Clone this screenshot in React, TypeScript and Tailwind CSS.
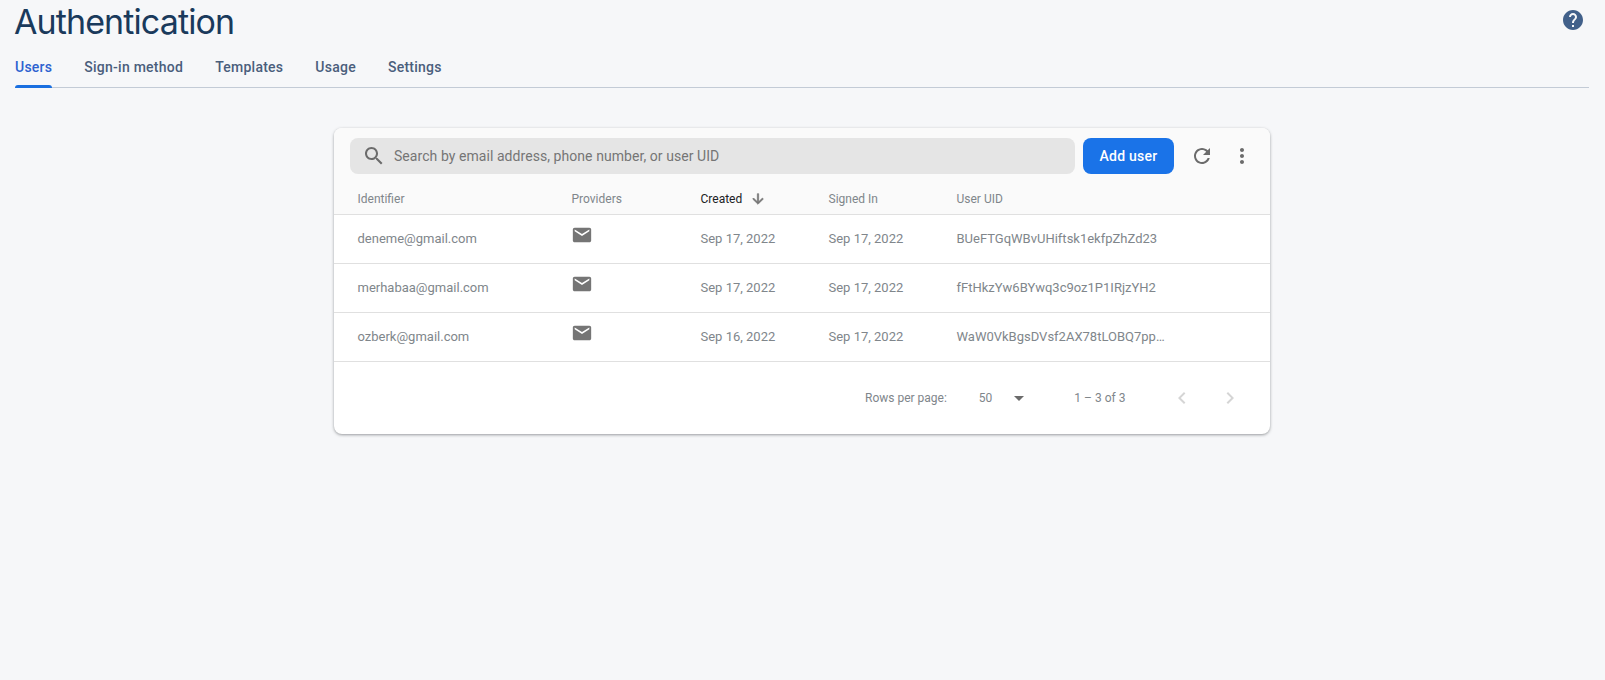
import React from "react";

const P = {
  search: "M15.5 14h-.79l-.28-.27C15.41 12.59 16 11.11 16 9.5 16 5.91 13.09 3 9.5 3S3 5.91 3 9.5 5.91 16 9.5 16c1.61 0 3.09-.59 4.23-1.57l.27.28v.79l5 4.99L20.49 19l-4.99-5zm-6 0C7.01 14 5 11.99 5 9.5S7.01 5 9.5 5 14 7.01 14 9.5 11.99 14 9.5 14z",
  refresh: "M17.65 6.35C16.2 4.9 14.21 4 12 4c-4.42 0-7.99 3.58-7.99 8s3.57 8 7.99 8c3.73 0 6.84-2.55 7.73-6h-2.08c-.82 2.33-3.04 4-5.65 4-3.31 0-6-2.69-6-6s2.69-6 6-6c1.66 0 3.14.69 4.22 1.78L13 11h7V4l-2.35 2.35z",
  more: "M12 8c1.1 0 2-.9 2-2s-.9-2-2-2-2 .9-2 2 .9 2 2 2zm0 2c-1.1 0-2 .9-2 2s.9 2 2 2 2-.9 2-2-.9-2-2-2zm0 6c-1.1 0-2 .9-2 2s.9 2 2 2 2-.9 2-2-.9-2-2-2z",
  mail: "M20 4H4c-1.1 0-1.99.9-1.99 2L2 18c0 1.1.9 2 2 2h16c1.1 0 2-.9 2-2V6c0-1.1-.9-2-2-2zm0 4l-8 5-8-5V6l8 5 8-5v2z",
  help: "M12 2C6.48 2 2 6.48 2 12s4.48 10 10 10 10-4.48 10-10S17.52 2 12 2zm1 17h-2v-2h2v2zm2.07-7.75l-.9.92C13.45 12.9 13 13.5 13 15h-2v-.5c0-1.1.45-2.1 1.17-2.83l1.24-1.26c.37-.36.59-.86.59-1.41 0-1.1-.9-2-2-2s-2 .9-2 2H8c0-2.21 1.79-4 4-4s4 1.79 4 4c0 .88-.36 1.68-.93 2.25z",
  down: "M20 12l-1.41-1.41L13 16.17V4h-2v12.17l-5.58-5.59L4 12l8 8 8-8z",
  left: "M15.41 7.41L14 6l-6 6 6 6 1.41-1.41L10.83 12z",
  right: "M10 6L8.59 7.41 13.17 12l-4.58 4.58L10 18l6-6z",
  caret: "M7 10l5 5 5-5z",
};

function Icon({ d, className, stroke }: { d: string; className: string; stroke?: boolean }) {
  return (
    <svg viewBox="0 0 24 24" className={className} fill="currentColor" stroke={stroke ? "currentColor" : "none"} strokeWidth={stroke ? 1 : 0}>
      <path d={d} />
    </svg>
  );
}

const rows = [
  ["deneme@gmail.com", "Sep 17, 2022", "Sep 17, 2022", "BUeFTGqWBvUHiftsk1ekfpZhZd23"],
  ["merhabaa@gmail.com", "Sep 17, 2022", "Sep 17, 2022", "fFtHkzYw6BYwq3c9oz1P1IRjzYH2"],
  ["ozberk@gmail.com", "Sep 16, 2022", "Sep 17, 2022", "WaW0VkBgsDVsf2AX78tLOBQ7pp…"],
];

const grid = "grid grid-cols-[214px_129px_128px_128px_1fr] pl-[23.5px]";

export default function App() {
  return (
    <div className="h-[680px] bg-[#f6f7f9] font-['Roboto',sans-serif] overflow-hidden">
      <header className="pl-[15px] pr-4">
        <div className="flex items-start justify-between h-[53px]">
          <h1 className="text-[34px] leading-[44px] text-[#1a3a5c] font-['Inter',sans-serif] font-normal -ml-px tracking-[-0.9px]">Authentication</h1>
          <Icon d={P.help} className="w-6 h-6 mt-2 mr-1 text-[#41608a]" />
        </div>
        <nav className="flex gap-8 h-[35px] border-b border-[#c3cbd6] text-sm font-medium text-[#4a5e7c] tracking-[0.25px]">
          <div className="relative pt-1 text-[#2d62d0]">
            Users
            <span className="absolute left-0 right-0 -bottom-px h-[3px] rounded-t-[3px] bg-[#1a6fe0]" />
          </div>
          <div className="pt-1">Sign-in method</div>
          <div className="pt-1">Templates</div>
          <div className="pt-1">Usage</div>
          <div className="pt-1">Settings</div>
        </nav>
      </header>

      <main className="ml-[334px] mt-10 w-[936px] h-[306px] rounded-lg bg-white shadow-[0_1px_3px_rgba(60,64,67,0.5)] overflow-hidden">
        <div className="bg-[#fafafa]">
          <div className="flex items-center h-[46px] pt-2.5 pl-4">
            <div className="flex items-center w-[725px] h-9 rounded-lg bg-[#e5e5e5] pl-3 text-sm text-[#757575] tracking-[0.06px]">
              <Icon d={P.search} className="w-6 h-6 text-[#6b6b6b] mr-2" />
              Search by email address, phone number, or user UID
            </div>
            <button className="ml-2 w-[91px] h-9 rounded-lg bg-[#1a73e8] text-white text-sm font-medium tracking-[0.25px]">Add user</button>
            <Icon d={P.refresh} className="ml-4 w-6 h-6 text-[#6b6b6b]" />
            <Icon d={P.more} className="ml-4 w-6 h-6 text-[#6b6b6b]" />
          </div>
          <div className={`${grid} items-center h-[41px] pt-[10px] text-xs text-[#80868b] border-b border-[#e0e0e0]`}>
            <div>Identifier</div>
            <div>Providers</div>
            <div className="flex items-center font-normal text-[#202124]">
              Created
              <Icon d={P.down} stroke className="ml-2 w-4 h-4 text-[#757575]" />
            </div>
            <div>Signed In</div>
            <div>User UID</div>
          </div>
        </div>
        {rows.map((r) => (
          <div key={r[0]} className={`${grid} items-center h-[49px] border-b border-[#e0e0e0] text-[13px] text-[#80868b]`}>
            <div>{r[0]}</div>
            <div><Icon d={P.mail} className="w-[22px] h-[22px] -ml-px -mt-2 text-[#757575]" /></div>
            <div>{r[1]}</div>
            <div>{r[2]}</div>
            <div>{r[3]}</div>
          </div>
        ))}
        <div className="flex items-center h-[72px] text-xs text-[#80868b]">
          <span className="ml-[531px]">Rows per page:</span>
          <span className="ml-8">50</span>
          <Icon d={P.caret} className="ml-[15px] w-[24px] h-[24px] text-[#6b6b6b]" />
          <span className="ml-[43px]">1 – 3 of 3</span>
          <Icon d={P.left} className="ml-[45px] w-6 h-6 text-[#d5d5d5]" />
          <Icon d={P.right} className="ml-[24px] w-6 h-6 text-[#d5d5d5]" />
        </div>
      </main>
    </div>
  );
}
